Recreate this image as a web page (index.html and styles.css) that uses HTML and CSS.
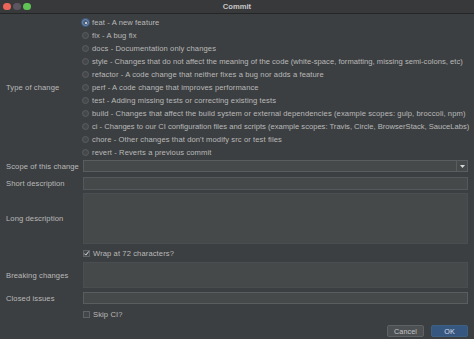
FILE: index.html
```html
<!DOCTYPE html>
<html>
<head>
<meta charset="utf-8">
<link rel="stylesheet" href="styles.css">
</head>
<body>
<div class="window">
  <header class="titlebar">
    <div class="lights">
      <span class="light red"></span>
      <span class="light mid"></span>
      <span class="light green"></span>
    </div>
    <div class="title">Commit</div>
  </header>
  <main class="form">
    <div class="row type-row">
      <div class="label">Type of change</div>
      <div class="radios">
        <div class="radio-item"><span class="radio checked"></span>feat - A new feature</div>
        <div class="radio-item"><span class="radio"></span>fix - A bug fix</div>
        <div class="radio-item"><span class="radio"></span>docs - Documentation only changes</div>
        <div class="radio-item wide"><span class="radio"></span>style - Changes that do not affect the meaning of the code (white-space, formatting, missing semi-colons, etc)</div>
        <div class="radio-item"><span class="radio"></span>refactor - A code change that neither fixes a bug nor adds a feature</div>
        <div class="radio-item"><span class="radio"></span>perf - A code change that improves performance</div>
        <div class="radio-item"><span class="radio"></span>test - Adding missing tests or correcting existing tests</div>
        <div class="radio-item"><span class="radio"></span>build - Changes that affect the build system or external dependencies (example scopes: gulp, broccoli, npm)</div>
        <div class="radio-item tight"><span class="radio"></span>ci - Changes to our CI configuration files and scripts (example scopes: Travis, Circle, BrowserStack, SauceLabs)</div>
        <div class="radio-item"><span class="radio"></span>chore - Other changes that don't modify src or test files</div>
        <div class="radio-item"><span class="radio"></span>revert - Reverts a previous commit</div>
      </div>
    </div>
    <div class="row scope-row">
      <div class="label">Scope of this change</div>
      <div class="combo">
        <div class="combo-field"></div>
        <div class="combo-arrow"><svg width="5" height="3" viewBox="0 0 5 3"><path d="M0 0H5L2.5 3Z" fill="#d8d8d8"/></svg></div>
      </div>
    </div>
    <div class="row short-row">
      <div class="label">Short description</div>
      <div class="input"></div>
    </div>
    <div class="row long-row">
      <div class="label">Long description</div>
      <div class="textarea"></div>
    </div>
    <div class="row check-row wrap-row">
      <div class="label"></div>
      <div class="check-item"><span class="checkbox checked"><svg width="7" height="7" viewBox="0 0 7 7"><path d="M1.3 3.6L2.8 5.1L5.8 1.4" fill="none" stroke="#e0e0e0" stroke-width="1"/></svg></span>Wrap at 72 characters?</div>
    </div>
    <div class="row breaking-row">
      <div class="label">Breaking changes</div>
      <div class="textarea"></div>
    </div>
    <div class="row closed-row">
      <div class="label">Closed issues</div>
      <div class="input"></div>
    </div>
    <div class="row check-row skip-row">
      <div class="label"></div>
      <div class="check-item"><span class="checkbox"></span>Skip CI?</div>
    </div>
  </main>
  <footer class="buttons">
    <button class="btn cancel">Cancel</button>
    <button class="btn ok">OK</button>
  </footer>
</div>
</body>
</html>
```
FILE: styles.css
```css
html, body {
  margin: 0;
  padding: 0;
  background: #3c3f41;
}
body {
  width: 474px;
  height: 339px;
  overflow: hidden;
  font-family: "Liberation Sans", Arial, sans-serif;
  font-size: 7.6px;
  letter-spacing: 0.1px;
  color: #b9b9b9;
}
.window {
  display: flex;
  flex-direction: column;
  height: 339px;
}
.titlebar {
  background: #37393b;
  border-bottom: 1px solid #232526;
  display: flex;
  align-items: center;
  position: relative;
  box-sizing: border-box;
  height: 14px;
}
.lights {
  display: flex;
  gap: 2.5px;
  padding-left: 3px;
}
.light {
  width: 7.5px;
  height: 7.5px;
  border-radius: 50%;
  display: block;
}
.red { background: #ec6559; }
.mid { background: #5d5660; }
.green { background: #5fc454; }
.title {
  position: absolute;
  left: 0;
  right: 0;
  text-align: center;
  font-weight: bold;
  color: #c8c8c8;
  font-size: 7.6px;
  letter-spacing: 0;
}
.form {
  display: flex;
  flex-direction: column;
  padding: 2px 6px 0 6px;
}
.row {
  display: grid;
  grid-template-columns: 77px 1fr;
  align-items: center;
}
.label {
  white-space: nowrap;
}
.radios {
  display: flex;
  flex-direction: column;
}
.radio-item {
  height: 13px;
  display: flex;
  align-items: center;
  white-space: nowrap;
}
.radio-item.wide { letter-spacing: 0.03px; }
.radio-item.tight { letter-spacing: 0; }
.radio {
  width: 7px;
  height: 7px;
  box-sizing: border-box;
  border-radius: 50%;
  border: 1px solid #5b5e60;
  background: #44484a;
  margin-right: 3px;
  margin-left: -1px;
  flex: none;
}
.radio.checked {
  background: #4b5e78;
  border-color: #6e8cb4;
  box-shadow: 0 0 0 1px #3f5a7e;
  position: relative;
}
.radio.checked::after {
  content: "";
  position: absolute;
  left: 1.5px;
  top: 1.5px;
  width: 2px;
  height: 2px;
  border-radius: 50%;
  background: #e8e8e8;
}
.scope-row { margin-top: 1px; }
.combo {
  height: 12px;
  display: flex;
  border: 1px solid #5a5d5f;
  background: #45494a;
  box-sizing: border-box;
}
.combo-field { flex: 1; }
.combo-arrow {
  width: 10px;
  border-left: 1px solid #5a5d5f;
  display: flex;
  align-items: center;
  justify-content: center;
}
.input {
  height: 13px;
  border: 1px solid #54585a;
  background: #45494a;
  box-sizing: border-box;
}
.short-row { margin-top: 5px; }
.long-row { margin-top: 3px; }
.textarea {
  background: #45494a;
  border: 1px solid #4a4e50;
  box-sizing: border-box;
}
.long-row .textarea { height: 51px; }
.breaking-row .textarea { height: 26px; }
.check-row { height: 16px; }
.wrap-row { margin-top: 1px; }
.check-item {
  display: flex;
  align-items: center;
  white-space: nowrap;
}
.checkbox {
  width: 7px;
  height: 7px;
  box-sizing: border-box;
  border: 1px solid #606365;
  background: #43474a;
  margin-right: 3px;
  position: relative;
  display: block;
}
.checkbox svg {
  position: absolute;
  left: -1px;
  top: -1px;
}
.breaking-row { margin-top: 1px; }
.closed-row { margin-top: 4px; }
.closed-row .input { height: 12px; border-color: #5a5d5f; }
.skip-row { margin-top: 2px; }
.buttons {
  display: flex;
  justify-content: flex-end;
  gap: 7px;
  padding: 0 6px 0 0;
  margin-top: 3px;
}
.btn {
  width: 37px;
  height: 12px;
  font-family: "Liberation Sans", Arial, sans-serif;
  font-size: 7.2px;
  letter-spacing: 0.1px;
  padding: 0;
  border-radius: 2px;
  box-sizing: border-box;
}
.cancel {
  background: #4c5052;
  border: 1px solid #5e6264;
  color: #c4c4c4;
}
.ok {
  background: #365880;
  border: 1px solid #3d6185;
  color: #d6dde6;
}
```
